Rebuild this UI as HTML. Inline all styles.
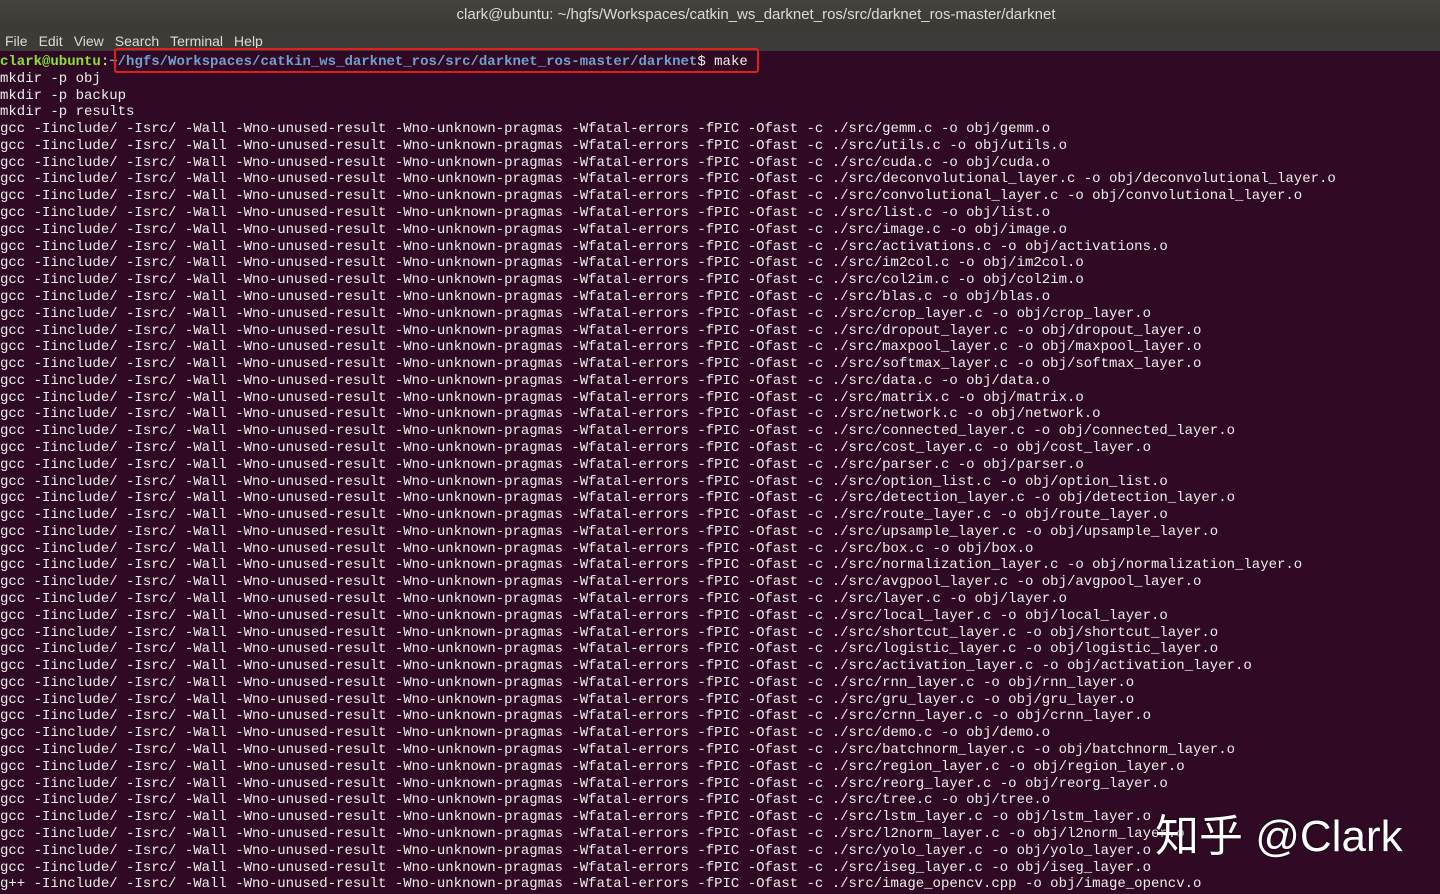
<!DOCTYPE html>
<html><head><meta charset="utf-8"><style>
html,body{margin:0;padding:0;width:1440px;height:894px;overflow:hidden;background:#300a24}
.title{position:absolute;left:0;top:0;width:1368px;padding-left:72px;height:30px;background:linear-gradient(#45443f,#3a3935);color:#dfdbd2;font:15px "Liberation Sans",sans-serif;text-align:center;line-height:29px}
.menu{position:absolute;left:0;top:30px;width:1440px;height:21px;background:#3c3b37;color:#dfdbd2;font:14px "Liberation Sans",sans-serif;line-height:22px}
.menu span{margin-left:5px;margin-right:6px}
pre{position:absolute;left:0;top:54px;margin:0;font:14px/16.78px "Liberation Mono","DejaVu Sans Mono",monospace;color:#eeeeec}
.g{color:#8ae234;font-weight:bold}.b{color:#729fcf;font-weight:bold}
.box{position:absolute;left:114px;top:48px;width:641px;height:21px;border:2.5px solid #e0201f;border-radius:3px}
.wm{position:absolute;left:1155px;top:800px;color:#fff;font:44px "Liberation Sans","Noto Sans CJK SC",sans-serif;text-shadow:0 0 2px #000}
</style></head><body>
<div class="title">clark@ubuntu: ~/hgfs/Workspaces/catkin_ws_darknet_ros/src/darknet_ros-master/darknet</div>
<div class="menu"><span>File</span><span>Edit</span><span>View</span><span>Search</span><span>Terminal</span><span>Help</span></div>
<pre><span class="g">clark@ubuntu</span>:<span class="b">~/hgfs/Workspaces/catkin_ws_darknet_ros/src/darknet_ros-master/darknet</span>$ make
mkdir -p obj
mkdir -p backup
mkdir -p results
gcc -Iinclude/ -Isrc/ -Wall -Wno-unused-result -Wno-unknown-pragmas -Wfatal-errors -fPIC -Ofast -c ./src/gemm.c -o obj/gemm.o
gcc -Iinclude/ -Isrc/ -Wall -Wno-unused-result -Wno-unknown-pragmas -Wfatal-errors -fPIC -Ofast -c ./src/utils.c -o obj/utils.o
gcc -Iinclude/ -Isrc/ -Wall -Wno-unused-result -Wno-unknown-pragmas -Wfatal-errors -fPIC -Ofast -c ./src/cuda.c -o obj/cuda.o
gcc -Iinclude/ -Isrc/ -Wall -Wno-unused-result -Wno-unknown-pragmas -Wfatal-errors -fPIC -Ofast -c ./src/deconvolutional_layer.c -o obj/deconvolutional_layer.o
gcc -Iinclude/ -Isrc/ -Wall -Wno-unused-result -Wno-unknown-pragmas -Wfatal-errors -fPIC -Ofast -c ./src/convolutional_layer.c -o obj/convolutional_layer.o
gcc -Iinclude/ -Isrc/ -Wall -Wno-unused-result -Wno-unknown-pragmas -Wfatal-errors -fPIC -Ofast -c ./src/list.c -o obj/list.o
gcc -Iinclude/ -Isrc/ -Wall -Wno-unused-result -Wno-unknown-pragmas -Wfatal-errors -fPIC -Ofast -c ./src/image.c -o obj/image.o
gcc -Iinclude/ -Isrc/ -Wall -Wno-unused-result -Wno-unknown-pragmas -Wfatal-errors -fPIC -Ofast -c ./src/activations.c -o obj/activations.o
gcc -Iinclude/ -Isrc/ -Wall -Wno-unused-result -Wno-unknown-pragmas -Wfatal-errors -fPIC -Ofast -c ./src/im2col.c -o obj/im2col.o
gcc -Iinclude/ -Isrc/ -Wall -Wno-unused-result -Wno-unknown-pragmas -Wfatal-errors -fPIC -Ofast -c ./src/col2im.c -o obj/col2im.o
gcc -Iinclude/ -Isrc/ -Wall -Wno-unused-result -Wno-unknown-pragmas -Wfatal-errors -fPIC -Ofast -c ./src/blas.c -o obj/blas.o
gcc -Iinclude/ -Isrc/ -Wall -Wno-unused-result -Wno-unknown-pragmas -Wfatal-errors -fPIC -Ofast -c ./src/crop_layer.c -o obj/crop_layer.o
gcc -Iinclude/ -Isrc/ -Wall -Wno-unused-result -Wno-unknown-pragmas -Wfatal-errors -fPIC -Ofast -c ./src/dropout_layer.c -o obj/dropout_layer.o
gcc -Iinclude/ -Isrc/ -Wall -Wno-unused-result -Wno-unknown-pragmas -Wfatal-errors -fPIC -Ofast -c ./src/maxpool_layer.c -o obj/maxpool_layer.o
gcc -Iinclude/ -Isrc/ -Wall -Wno-unused-result -Wno-unknown-pragmas -Wfatal-errors -fPIC -Ofast -c ./src/softmax_layer.c -o obj/softmax_layer.o
gcc -Iinclude/ -Isrc/ -Wall -Wno-unused-result -Wno-unknown-pragmas -Wfatal-errors -fPIC -Ofast -c ./src/data.c -o obj/data.o
gcc -Iinclude/ -Isrc/ -Wall -Wno-unused-result -Wno-unknown-pragmas -Wfatal-errors -fPIC -Ofast -c ./src/matrix.c -o obj/matrix.o
gcc -Iinclude/ -Isrc/ -Wall -Wno-unused-result -Wno-unknown-pragmas -Wfatal-errors -fPIC -Ofast -c ./src/network.c -o obj/network.o
gcc -Iinclude/ -Isrc/ -Wall -Wno-unused-result -Wno-unknown-pragmas -Wfatal-errors -fPIC -Ofast -c ./src/connected_layer.c -o obj/connected_layer.o
gcc -Iinclude/ -Isrc/ -Wall -Wno-unused-result -Wno-unknown-pragmas -Wfatal-errors -fPIC -Ofast -c ./src/cost_layer.c -o obj/cost_layer.o
gcc -Iinclude/ -Isrc/ -Wall -Wno-unused-result -Wno-unknown-pragmas -Wfatal-errors -fPIC -Ofast -c ./src/parser.c -o obj/parser.o
gcc -Iinclude/ -Isrc/ -Wall -Wno-unused-result -Wno-unknown-pragmas -Wfatal-errors -fPIC -Ofast -c ./src/option_list.c -o obj/option_list.o
gcc -Iinclude/ -Isrc/ -Wall -Wno-unused-result -Wno-unknown-pragmas -Wfatal-errors -fPIC -Ofast -c ./src/detection_layer.c -o obj/detection_layer.o
gcc -Iinclude/ -Isrc/ -Wall -Wno-unused-result -Wno-unknown-pragmas -Wfatal-errors -fPIC -Ofast -c ./src/route_layer.c -o obj/route_layer.o
gcc -Iinclude/ -Isrc/ -Wall -Wno-unused-result -Wno-unknown-pragmas -Wfatal-errors -fPIC -Ofast -c ./src/upsample_layer.c -o obj/upsample_layer.o
gcc -Iinclude/ -Isrc/ -Wall -Wno-unused-result -Wno-unknown-pragmas -Wfatal-errors -fPIC -Ofast -c ./src/box.c -o obj/box.o
gcc -Iinclude/ -Isrc/ -Wall -Wno-unused-result -Wno-unknown-pragmas -Wfatal-errors -fPIC -Ofast -c ./src/normalization_layer.c -o obj/normalization_layer.o
gcc -Iinclude/ -Isrc/ -Wall -Wno-unused-result -Wno-unknown-pragmas -Wfatal-errors -fPIC -Ofast -c ./src/avgpool_layer.c -o obj/avgpool_layer.o
gcc -Iinclude/ -Isrc/ -Wall -Wno-unused-result -Wno-unknown-pragmas -Wfatal-errors -fPIC -Ofast -c ./src/layer.c -o obj/layer.o
gcc -Iinclude/ -Isrc/ -Wall -Wno-unused-result -Wno-unknown-pragmas -Wfatal-errors -fPIC -Ofast -c ./src/local_layer.c -o obj/local_layer.o
gcc -Iinclude/ -Isrc/ -Wall -Wno-unused-result -Wno-unknown-pragmas -Wfatal-errors -fPIC -Ofast -c ./src/shortcut_layer.c -o obj/shortcut_layer.o
gcc -Iinclude/ -Isrc/ -Wall -Wno-unused-result -Wno-unknown-pragmas -Wfatal-errors -fPIC -Ofast -c ./src/logistic_layer.c -o obj/logistic_layer.o
gcc -Iinclude/ -Isrc/ -Wall -Wno-unused-result -Wno-unknown-pragmas -Wfatal-errors -fPIC -Ofast -c ./src/activation_layer.c -o obj/activation_layer.o
gcc -Iinclude/ -Isrc/ -Wall -Wno-unused-result -Wno-unknown-pragmas -Wfatal-errors -fPIC -Ofast -c ./src/rnn_layer.c -o obj/rnn_layer.o
gcc -Iinclude/ -Isrc/ -Wall -Wno-unused-result -Wno-unknown-pragmas -Wfatal-errors -fPIC -Ofast -c ./src/gru_layer.c -o obj/gru_layer.o
gcc -Iinclude/ -Isrc/ -Wall -Wno-unused-result -Wno-unknown-pragmas -Wfatal-errors -fPIC -Ofast -c ./src/crnn_layer.c -o obj/crnn_layer.o
gcc -Iinclude/ -Isrc/ -Wall -Wno-unused-result -Wno-unknown-pragmas -Wfatal-errors -fPIC -Ofast -c ./src/demo.c -o obj/demo.o
gcc -Iinclude/ -Isrc/ -Wall -Wno-unused-result -Wno-unknown-pragmas -Wfatal-errors -fPIC -Ofast -c ./src/batchnorm_layer.c -o obj/batchnorm_layer.o
gcc -Iinclude/ -Isrc/ -Wall -Wno-unused-result -Wno-unknown-pragmas -Wfatal-errors -fPIC -Ofast -c ./src/region_layer.c -o obj/region_layer.o
gcc -Iinclude/ -Isrc/ -Wall -Wno-unused-result -Wno-unknown-pragmas -Wfatal-errors -fPIC -Ofast -c ./src/reorg_layer.c -o obj/reorg_layer.o
gcc -Iinclude/ -Isrc/ -Wall -Wno-unused-result -Wno-unknown-pragmas -Wfatal-errors -fPIC -Ofast -c ./src/tree.c -o obj/tree.o
gcc -Iinclude/ -Isrc/ -Wall -Wno-unused-result -Wno-unknown-pragmas -Wfatal-errors -fPIC -Ofast -c ./src/lstm_layer.c -o obj/lstm_layer.o
gcc -Iinclude/ -Isrc/ -Wall -Wno-unused-result -Wno-unknown-pragmas -Wfatal-errors -fPIC -Ofast -c ./src/l2norm_layer.c -o obj/l2norm_layer.o
gcc -Iinclude/ -Isrc/ -Wall -Wno-unused-result -Wno-unknown-pragmas -Wfatal-errors -fPIC -Ofast -c ./src/yolo_layer.c -o obj/yolo_layer.o
gcc -Iinclude/ -Isrc/ -Wall -Wno-unused-result -Wno-unknown-pragmas -Wfatal-errors -fPIC -Ofast -c ./src/iseg_layer.c -o obj/iseg_layer.o
g++ -Iinclude/ -Isrc/ -Wall -Wno-unused-result -Wno-unknown-pragmas -Wfatal-errors -fPIC -Ofast -c ./src/image_opencv.cpp -o obj/image_opencv.o</pre>
<div class="box"></div>
<div class="wm">知乎 @Clark</div>
</body></html>
